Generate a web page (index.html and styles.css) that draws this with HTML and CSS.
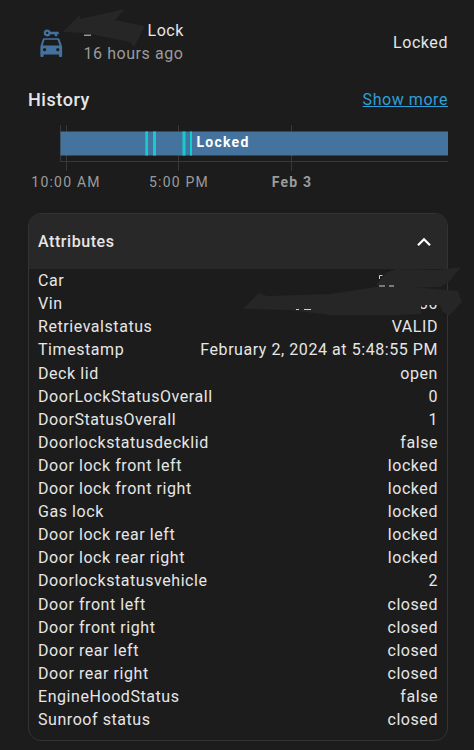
FILE: index.html
```html
<!DOCTYPE html>
<html lang="en">
<head>
    <meta charset="UTF-8">
    <meta name="viewport" content="width=device-width, initial-scale=1.0">
    <title>Lock</title>
    <link rel="stylesheet" href="styles.css">
</head>
<body>
    <div class="state">
        <svg class="car-icon" width="24" height="30" viewBox="0 0 24 30">
            <path fill-rule="evenodd" d="M8.2 1.4a3.5 3.5 0 0 1 3.3 2.3h8.2v2.5h-1.5v2h-2.5v-2h-4.2A3.5 3.5 0 1 1 8.2 1.4zm0 2.3a1.2 1.2 0 1 0 0 2.4 1.2 1.2 0 0 0 0-2.4z"/>
            <path fill-rule="evenodd" d="M5.2 10.2h13.8q1.3 0 1.7 1.2l2.4 7V28q0 1-1 1h-1.2q-1 0-1-1v-1.4H4.6V28q0 1-1 1h-1.2q-1 0-1-1v-9.6l2.2-7q.4-1.2 1.6-1.2zm.3 1.6-1.8 5.7h16.8l-1.9-5.7zM5.6 20.1a1.6 1.6 0 1 0 0 3.2 1.6 1.6 0 0 0 0-3.2zm13.2 0a1.6 1.6 0 1 0 0 3.2 1.6 1.6 0 0 0 0-3.2z"/>
        </svg>
        <div class="info">
            <div class="name">Lock</div>
            <div class="time">16 hours ago</div>
        </div>
        <div class="value">Locked</div>
        <svg class="scribble scribble-name" width="90" height="50" viewBox="60 0 90 50">
            <path d="M63 32 80 15 80 19 125 9 115 20 145 26 134 47 130 42 95 35 84 33z"/>
            <path class="mark" d="M84 35.2h7"/>
        </svg>
    </div>

    <div class="history-header">
        <h2>History</h2>
        <a href="#">Show more</a>
    </div>

    <div class="chart">
        <svg width="420" height="50" viewBox="28 124 420 50">
            <path class="grid" d="M60.5 125v37M66.5 125v46M178.5 125v46M291.5 125v46M60 161.5h388"/>
            <rect class="locked" x="60.5" y="131.5" width="387.5" height="24"/>
            <path class="unlocked" d="M145.3 131.5h2.7v24h-2.7zM153 131.5h3v24h-3zM182.5 131.5h3v24h-3zM190 131.5h2v24h-2z"/>
            <text class="bar-label" x="196.5" y="147">Locked</text>
        </svg>
        <div class="ticks">
            <span>10:00 AM</span>
            <span>5:00 PM</span>
            <span class="day">Feb 3</span>
        </div>
    </div>

    <div class="attributes">
        <div class="attributes-header">
            <span>Attributes</span>
            <svg width="16" height="10" viewBox="0 0 16 10"><path d="M2 8.3 8 2.2l6 6.1"/></svg>
        </div>
        <div class="rows">
            <div class="row"><span>Car</span></div>
            <div class="row"><span>Vin</span><span>30</span></div>
            <div class="row"><span>Retrievalstatus</span><span>VALID</span></div>
            <div class="row"><span>Timestamp</span><span>February 2, 2024 at 5:48:55 PM</span></div>
            <div class="row"><span>Deck lid</span><span>open</span></div>
            <div class="row"><span>DoorLockStatusOverall</span><span>0</span></div>
            <div class="row"><span>DoorStatusOverall</span><span>1</span></div>
            <div class="row"><span>Doorlockstatusdecklid</span><span>false</span></div>
            <div class="row"><span>Door lock front left</span><span>locked</span></div>
            <div class="row"><span>Door lock front right</span><span>locked</span></div>
            <div class="row"><span>Gas lock</span><span>locked</span></div>
            <div class="row"><span>Door lock rear left</span><span>locked</span></div>
            <div class="row"><span>Door lock rear right</span><span>locked</span></div>
            <div class="row"><span>Doorlockstatusvehicle</span><span>2</span></div>
            <div class="row"><span>Door front left</span><span>closed</span></div>
            <div class="row"><span>Door front right</span><span>closed</span></div>
            <div class="row"><span>Door rear left</span><span>closed</span></div>
            <div class="row"><span>Door rear right</span><span>closed</span></div>
            <div class="row"><span>EngineHoodStatus</span><span>false</span></div>
            <div class="row"><span>Sunroof status</span><span>closed</span></div>
        </div>
        <svg class="scribble scribble-rows" width="232" height="60" viewBox="240 264 232 60">
            <path d="M376 284 386 272 396 268 440 269 461 266 449 281 440 286 400 287z"/>
            <path d="M243 308 259 292 267 295 330 293 376 286 400 285 458 290 462 301 449 315 442 310 440 304 421 304 421 313 400 314 330 314 290 309z"/>
            <path class="mark" d="M379.5 278v-3.5h3M379 285h6M389 285h5M296 308.5h3M304 308.5h7"/>
        </svg>
    </div>
</body>
</html>
```
FILE: styles.css
```css
body {
    font-family: Roboto, sans-serif;
    font-size: 16px;
    letter-spacing: 0.56px;
    margin: 0;
    height: 750px;
    padding: 0 26px 0 28px;
    box-sizing: border-box;
    overflow: hidden;
    background-color: #1c1c1c;
    color: #e6e6e6;
}

.state {
    position: relative;
    display: flex;
    align-items: center;
    height: 84px;
}

.car-icon {
    margin-left: 11px;
    margin-top: 1px;
    fill: #4472a0;
}

.info {
    flex: 1;
    margin-left: 20.5px;
    line-height: 23px;
}

.name {
    padding-left: 64px;
}

.time {
    color: #9b9b9b;
}

.scribble {
    position: absolute;
    fill: #262626;
}

.scribble .mark {
    fill: none;
    stroke: #d0d0d0;
    stroke-width: 1;
}

.scribble-name {
    left: 32px;
    top: 0;
}

.history-header {
    display: flex;
    justify-content: space-between;
    align-items: center;
    height: 31px;
}

h2 {
    font-size: 18px;
    font-weight: 500;
    margin: 0;
}

a {
    color: #2f9fd8;
}

.chart {
    padding-top: 9px;
    height: 90px;
    box-sizing: border-box;
}

.chart svg {
    display: block;
}

.grid {
    stroke: #383838;
    fill: none;
}

.locked {
    fill: #44739e;
}

.unlocked {
    fill: #14cbd2;
}

.bar-label {
    font-size: 14px;
    font-weight: 700;
    letter-spacing: 1.25px;
    fill: #fff;
}

.ticks {
    display: grid;
    grid-template-columns: 96px 130px 96px;
    margin-left: -10px;
    font-size: 14px;
    letter-spacing: 1.2px;
    line-height: 16px;
    text-align: center;
    color: #9b9b9b;
}

.ticks .day {
    font-weight: 700;
}

.attributes {
    position: relative;
    height: 528px;
    box-sizing: border-box;
    border: 1px solid #333;
    border-radius: 13px;
    margin-top: 8px;
}

.attributes-header {
    display: flex;
    align-items: center;
    justify-content: space-between;
    height: 55px;
    padding: 0 15px 0 9px;
    border-radius: 12px 12px 0 0;
    background-color: #282828;
    font-weight: 500;
}

.attributes-header path {
    fill: none;
    stroke: #fff;
    stroke-width: 2.2;
}

.rows {
    padding: 0.2px 9px 0;
}

.row {
    display: flex;
    justify-content: space-between;
    line-height: 23.1px;
}

.scribble-rows {
    left: 211px;
    top: 51px;
}
```
